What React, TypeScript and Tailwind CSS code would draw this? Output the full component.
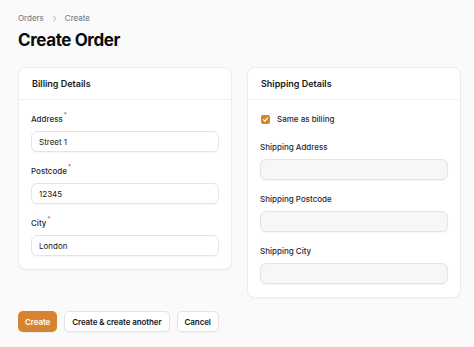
import React from "react";

function Label({ text, required }: { text: string; required?: boolean }) {
  return (
    <div className="h-[12px] flex items-center text-[8px] font-medium text-[#1f2937] leading-none">
      {text}
      {required && <sup className="text-[#dc2626] text-[6px] font-medium ml-[1px] -mt-[2px]">*</sup>}
    </div>
  );
}

function Input({ value, disabled }: { value?: string; disabled?: boolean }) {
  return (
    <div
      className={
        "h-[21px] rounded-[6px] border border-[#e4e4e7] shadow-[0_1px_1px_rgba(0,0,0,0.04)] flex items-center px-[7px] text-[8px] text-[#18181b] " +
        (disabled ? "bg-[#f7f7f7]" : "bg-white")
      }
    >
      {value}
    </div>
  );
}

function Field({ label, value, required, disabled }: { label: string; value?: string; required?: boolean; disabled?: boolean }) {
  return (
    <div className="flex flex-col gap-[6px]">
      <Label text={label} required={required} />
      <Input value={value} disabled={disabled} />
    </div>
  );
}

function Card({ title, children }: { title: string; children: React.ReactNode }) {
  return (
    <div className="bg-white rounded-[8px] border border-[#ececec] shadow-[0_1px_2px_rgba(0,0,0,0.04)]">
      <div className="h-[32px] flex items-center px-[13px] border-b border-[#f0f0f0] text-[9px] font-semibold text-[#18181b]">
        {title}
      </div>
      <div className="px-[12px] py-[13px] flex flex-col gap-[13px]">{children}</div>
    </div>
  );
}

export default function App() {
  return (
    <div
      className="w-[474px] h-[347px] bg-[#fafafa] pl-[18px] pr-[13px] overflow-hidden"
      style={{ fontFamily: "Inter, 'Noto Sans', sans-serif" }}
    >
      <div className="pt-[12px] h-[12px] box-content flex items-center gap-[7px] text-[8px] text-[#6b7280]">
        <span>Orders</span>
        <svg width="7" height="7" viewBox="0 0 10 10" fill="none" stroke="#9ca3af" strokeWidth="1.4">
          <path d="M3.5 1.5 L7 5 L3.5 8.5" />
        </svg>
        <span>Create</span>
      </div>
      <h1 className="mt-[5px] text-[17px] leading-[22px] font-bold text-[#0a0a0a] tracking-[-0.4px]">Create Order</h1>
      <div className="mt-[16px] grid grid-cols-2 gap-[15px] items-start">
        <Card title="Billing Details">
          <Field label="Address" value="Street 1" required />
          <Field label="Postcode" value="12345" required />
          <Field label="City" value="London" required />
        </Card>
        <Card title="Shipping Details">
          <div className="h-[12px] mb-[3px] flex items-center gap-[7px] pl-[1px]">
            <div className="w-[9px] h-[9px] rounded-[2px] bg-[#d7832f] flex items-center justify-center">
              <svg width="7" height="7" viewBox="0 0 10 10" fill="none" stroke="white" strokeWidth="1.8" strokeLinecap="round" strokeLinejoin="round">
                <path d="M2 5.2 L4.2 7.3 L8 2.8" />
              </svg>
            </div>
            <span className="text-[8px] font-medium text-[#1f2937]">Same as billing</span>
          </div>
          <Field label="Shipping Address" disabled />
          <Field label="Shipping Postcode" disabled />
          <Field label="Shipping City" disabled />
        </Card>
      </div>
      <div className="mt-[13px] flex gap-[7px]">
        <button className="h-[21px] px-[7px] rounded-[5px] bg-[#d7832f] text-white text-[8px] font-semibold tracking-[-0.1px] shadow-[0_1px_1px_rgba(0,0,0,0.06)]">
          Create
        </button>
        <button className="h-[21px] px-[7px] rounded-[5px] bg-white border border-[#e4e4e7] text-[#18181b] text-[8px] font-semibold tracking-[-0.1px] shadow-[0_1px_1px_rgba(0,0,0,0.04)]">
          Create &amp; create another
        </button>
        <button className="h-[21px] px-[7px] rounded-[5px] bg-white border border-[#e4e4e7] text-[#18181b] text-[8px] font-semibold tracking-[-0.1px] shadow-[0_1px_1px_rgba(0,0,0,0.04)]">
          Cancel
        </button>
      </div>
    </div>
  );
}
